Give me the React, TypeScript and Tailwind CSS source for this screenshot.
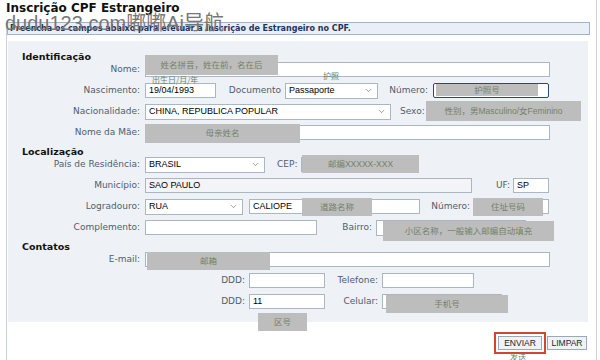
import { ChevronDown } from 'lucide-react'
import type { ReactNode } from 'react'

// annotation boxes pasted over the form fields in the screenshot
const notes = [
  { x: 145, y: 55, w: 133, h: 20, text: '姓名拼音，姓在前，名在后' },
  { x: 436, y: 84, w: 102, h: 12, text: '护照号' },
  { x: 426, y: 101, w: 155, h: 20, text: '性别，男Masculino/女Feminino' },
  { x: 145, y: 124, w: 155, h: 19, text: '母亲姓名' },
  { x: 302, y: 155, w: 117, h: 18, text: '邮编XXXXX-XXX' },
  { x: 302, y: 198, w: 70, h: 18, text: '道路名称' },
  { x: 473, y: 198, w: 70, h: 18, text: '住址号码' },
  { x: 383, y: 221, w: 171, h: 20, text: '小区名称，一般输入邮编自动填充' },
  { x: 147, y: 252, w: 123, h: 18, text: '邮箱' },
  { x: 386, y: 295, w: 122, h: 18, text: '手机号' },
  { x: 258, y: 313, w: 49, h: 18, text: '区号' },
]

function Label({ className = '', children }: { className?: string; children: ReactNode }) {
  return (
    <div className={`shrink-0 whitespace-nowrap text-right text-[9px] leading-[21px] text-[#4f5e70] ${className}`}>
      {children}
    </div>
  )
}

function Field({ className = '', value, focused }: { className?: string; value?: string; focused?: boolean }) {
  return (
    <div
      className={`flex h-[15px] shrink-0 items-center px-[3px] font-['Liberation_Sans',Arial,sans-serif] text-[9px] text-black ${
        focused ? 'rounded-[2px] border-[1.5px] border-[#274a7c]' : 'border border-[#a9b6c4]'
      } ${className || 'bg-white'}`}
    >
      {value}
    </div>
  )
}

function Select({ className = '', value }: { className?: string; value?: string }) {
  return (
    <div
      className={`flex h-[16px] shrink-0 items-center justify-between border border-[#a9b6c4] bg-white pl-[3px] pr-[4px] font-['Liberation_Sans',Arial,sans-serif] text-[9px] text-black ${className}`}
    >
      <span>{value}</span>
      <ChevronDown size={9} strokeWidth={1.5} className="text-[#555]" />
    </div>
  )
}

function Row({ children }: { children: ReactNode }) {
  return <div className="flex h-[21px] items-center">{children}</div>
}

function Section({ title, first, children }: { title: string; first?: boolean; children: ReactNode }) {
  return (
    <div>
      <div className={`h-[4px] pl-[14px] text-[9.5px] font-bold leading-[4px] text-[#111] ${first ? '' : 'mt-[7px]'}`}>
        {title}
      </div>
      {children}
    </div>
  )
}

export default function App() {
  return (
    <div className="relative h-[360px] w-[600px] overflow-hidden bg-white font-['DejaVu_Sans',Verdana,sans-serif]">
      <div className="h-[360px] w-[597px] border-r border-[#cfd3d8]">
        <div className="h-[22px] pl-[6px] pt-[1px] text-[12px] font-bold leading-[15px] text-[#111]">
          Inscrição CPF Estrangeiro
        </div>

        <div className="ml-[6px] flex h-[338px] w-[584px] flex-col border-l border-[#c9d2dc]">
          <div className="h-[13px] border border-[#a3b4c8] bg-[#e9eff7] pl-[2px] text-[8px] font-bold leading-[11px] text-[#1c3560]">
            Preencha os campos abaixo para efetuar a Inscrição de Estrangeiro no CPF.
          </div>

          <div className="ml-[1px] mt-[6px] w-[580px] bg-[#eef1f5] pb-[10px] pt-[14px]">
            <Section title="Identificação" first>
              <Row>
                <Label className="w-[132px]">Nome:</Label>
                <Field className="ml-[5px] w-[405px] bg-white" />
              </Row>
              <Row>
                <Label className="w-[132px]">Nascimento:</Label>
                <Field className="ml-[5px] w-[71px] bg-white" value="19/04/1993" />
                <Label className="w-[65px]">Documento</Label>
                <Select className="ml-[4px] w-[93px]" value="Passaporte" />
                <Label className="w-[50px]">Número:</Label>
                <Field className="ml-[5px] w-[116px] bg-white" focused />
              </Row>
              <Row>
                <Label className="w-[132px]">Nacionalidade:</Label>
                <Select className="ml-[5px] w-[246px]" value="CHINA, REPUBLICA POPULAR" />
                <Label className="ml-[9px] text-[#3f5f8c]">Sexo:</Label>
              </Row>
              <Row>
                <Label className="w-[132px]">Nome da Mãe:</Label>
                <Field className="ml-[5px] w-[405px] bg-white" />
              </Row>
            </Section>

            <Section title="Localização">
              <Row>
                <Label className="w-[132px]">País de Residência:</Label>
                <Select className="ml-[5px] w-[120px]" value="BRASIL" />
                <Label className="ml-[12px] text-[#3f5f8c]">CEP:</Label>
                <Field className="ml-[4px] w-[100px] bg-white" />
              </Row>
              <Row>
                <Label className="w-[132px]">Município:</Label>
                <Field className="ml-[5px] w-[327px] bg-[#f2f4f7]" value="SAO PAULO" />
                <Label className="w-[38px]">UF:</Label>
                <Field className="ml-[3px] w-[36px] bg-white" value="SP" />
              </Row>
              <Row>
                <Label className="w-[132px]">Logradouro:</Label>
                <Select className="ml-[5px] w-[98px]" value="RUA" />
                <Field className="ml-[6px] w-[171px] bg-white" value="CALIOPE" />
                <Label className="w-[50px]">Número:</Label>
                <Field className="ml-[3px] w-[76px] bg-white" />
              </Row>
              <Row>
                <Label className="w-[132px]">Complemento:</Label>
                <Field className="ml-[5px] w-[172px] bg-white" />
                <Label className="w-[55px]">Bairro:</Label>
                <Select className="ml-[4px] w-[150px]" />
              </Row>
            </Section>

            <Section title="Contatos">
              <Row>
                <Label className="w-[132px]">E-mail:</Label>
                <Field className="ml-[5px] w-[405px] bg-white" />
              </Row>
              <Row>
                <Label className="w-[237px]">DDD:</Label>
                <Field className="ml-[4px] w-[76px] bg-white" />
                <Label className="w-[53px]">Telefone:</Label>
                <Field className="ml-[4px] w-[92px] bg-white" />
              </Row>
              <Row>
                <Label className="w-[237px]">DDD:</Label>
                <Field className="ml-[4px] w-[76px] bg-white" value="11" />
                <Label className="w-[53px]">Celular:</Label>
                <Field className="ml-[4px] w-[120px] bg-white" />
              </Row>
            </Section>
          </div>

          <div className="mt-[10px] flex items-start justify-end pr-[3px]">
            <div className="flex border-2 border-[#d4452e] p-[2px]">
              <button className="h-[14px] w-[44px] border border-[#9aa8b8] bg-[#eef3f7] font-['Liberation_Sans',Arial,sans-serif] text-[8.5px] leading-[12px] text-[#222]">
                ENVIAR
              </button>
            </div>
            <button className="ml-[1px] mt-[4px] h-[14px] w-[40px] border border-[#9aa8b8] bg-[#eef3f7] font-['Liberation_Sans',Arial,sans-serif] text-[8.5px] leading-[12px] text-[#222]">
              LIMPAR
            </button>
          </div>
        </div>
      </div>

      {/* watermark */}
      <div className="pointer-events-none absolute left-[5px] top-[10px] font-['Liberation_Sans','Noto_Sans_CJK_SC',sans-serif] text-[20px] leading-[26px] text-[#777]">
        dudu123.com嘟嘟Ai导航
      </div>

      {/* annotations */}
      <div className="absolute left-[152px] top-[75px] font-['Noto_Sans_CJK_SC',sans-serif] text-[8px] leading-[10px] text-[#6f8164]">
        出生日/月/年
      </div>
      <div className="absolute left-[323px] top-[71px] font-['Noto_Sans_CJK_SC',sans-serif] text-[8px] leading-[10px] text-[#6f8164]">
        护照
      </div>
      <div className="absolute left-[510px] top-[352px] font-['Noto_Sans_CJK_SC',sans-serif] text-[8px] leading-[10px] text-[#6f8164]">
        发送
      </div>
      {notes.map((n) => (
        <div
          key={n.text}
          className="absolute flex items-center justify-center bg-[#bdbdbd] font-['Liberation_Sans','Noto_Sans_CJK_SC',sans-serif] text-[8.5px] text-[#738268]"
          style={{ left: n.x, top: n.y, width: n.w, height: n.h }}
        >
          {n.text}
        </div>
      ))}
    </div>
  )
}
